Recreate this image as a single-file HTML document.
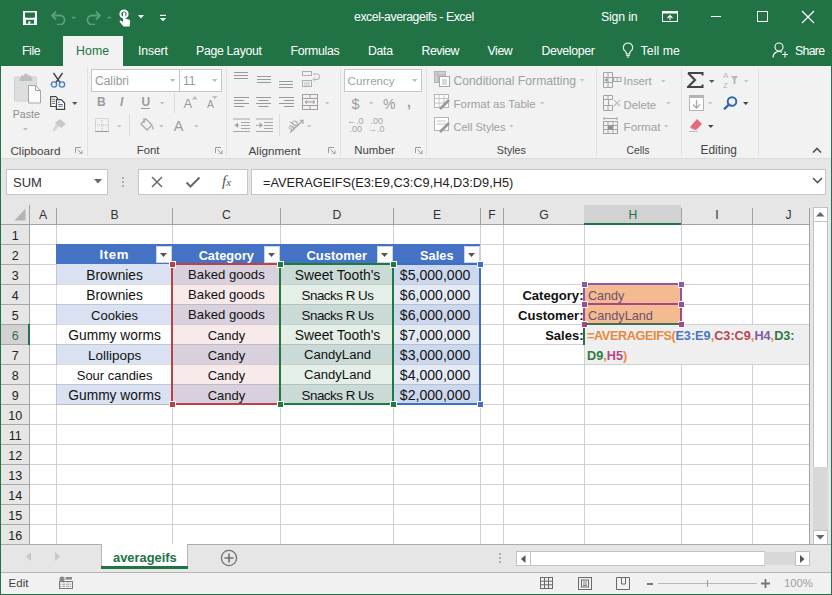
<!DOCTYPE html>
<html><head><meta charset="utf-8"><style>
html,body{margin:0;padding:0;}
body{width:832px;height:595px;position:relative;overflow:hidden;background:#e6e6e6;font-family:"Liberation Sans",sans-serif;}
body>div{position:absolute;box-sizing:content-box;}
.t{white-space:pre;}
</style></head><body>
<div style="left:0px;top:0px;width:832px;height:66px;background:#217346;"></div>
<svg style="position:absolute;left:23px;top:11px;" width="14" height="14" viewBox="0 0 14 14"><rect x="0" y="0" width="14" height="14" fill="#fff"/><path d="M2 1.6h10v3.6a1.5 1.5 0 0 1-1.5 1.5h-7A1.5 1.5 0 0 1 2 5.2z" fill="#217346"/><rect x="3" y="8.8" width="8" height="3.9" fill="#217346"/><rect x="5.3" y="10.4" width="2.1" height="2.3" fill="#fff"/></svg>
<svg style="position:absolute;left:50px;top:9px;" width="28" height="16" viewBox="0 0 28 16"><path d="M6 2.5 2 6.5 6 10.5" fill="none" stroke="#5d9f7b" stroke-width="1.8"/><path d="M2.5 6.5H10a4.6 4.6 0 0 1 0 9.2H7" fill="none" stroke="#5d9f7b" stroke-width="1.8"/><rect x="22" y="7.8" width="3.5" height="1.6" fill="#5d9f7b"/></svg>
<svg style="position:absolute;left:85px;top:9px;" width="28" height="16" viewBox="0 0 28 16"><path d="M11 2.5 15 6.5 11 10.5" fill="none" stroke="#5d9f7b" stroke-width="1.8"/><path d="M14.5 6.5H7a4.6 4.6 0 0 0 0 9.2h3" fill="none" stroke="#5d9f7b" stroke-width="1.8"/><rect x="22.5" y="7.8" width="3.5" height="1.6" fill="#5d9f7b"/></svg>
<svg style="position:absolute;left:118px;top:9px;" width="14" height="18" viewBox="0 0 14 18"><circle cx="6" cy="5" r="3.6" fill="none" stroke="#fff" stroke-width="2"/><path d="M5 4.5a1.2 1.2 0 0 1 2.4 0v5l4 1.3.8 1.2-.6 5.5H5.5L1.5 12.5l.6-1.2 2.9 1.6z" fill="#fff"/></svg>
<svg style="position:absolute;left:138px;top:15px;" width="7" height="4" viewBox="0 0 7 4"><path d="M0 0h6l-3 3.5z" fill="#fff"/></svg>
<svg style="position:absolute;left:159px;top:14px;" width="8" height="8" viewBox="0 0 8 8"><rect x="1" y="0.8" width="6" height="1.2" fill="#fff"/><path d="M0.8 4h6.4L4 7.2z" fill="#fff"/></svg>
<div class="t" style="left:354px;top:10.24px;font-size:12.3px;line-height:15px;color:#fff;font-weight:400;letter-spacing:-0.45px;">excel-averageifs - Excel</div>
<div class="t" style="left:601px;top:10.24px;font-size:12.3px;line-height:15px;color:#fff;font-weight:400;letter-spacing:-0.18px;">Sign in</div>
<svg style="position:absolute;left:662px;top:11px;" width="17" height="12" viewBox="0 0 17 12"><rect x="0.5" y="0.5" width="15" height="10" fill="none" stroke="#fff"/><rect x="0.5" y="0.5" width="15" height="2" fill="#fff"/><path d="M8 9V4.5M5.5 7 8 4.5 10.5 7" fill="none" stroke="#fff" stroke-width="1.1"/></svg>
<div style="left:711px;top:16px;width:10px;height:1px;background:#fff;"></div>
<div style="left:757px;top:11px;width:9px;height:9px;border:1px solid #fff;background:transparent;"></div>
<svg style="position:absolute;left:801px;top:10px;" width="14" height="14" viewBox="0 0 14 14"><path d="M1 1 13 13M13 1 1 13" stroke="#fff" stroke-width="1.3"/></svg>
<div style="left:63px;top:36px;width:60px;height:30px;background:#f2f2f2;"></div>
<div class="t" style="left:22px;top:44.24px;font-size:12.3px;line-height:15px;color:#fff;font-weight:400;letter-spacing:-0.43px;">File</div>
<div class="t" style="left:76px;top:44.24px;font-size:12.3px;line-height:15px;color:#217346;font-weight:400;letter-spacing:0.13px;">Home</div>
<div class="t" style="left:138px;top:44.24px;font-size:12.3px;line-height:15px;color:#fff;font-weight:400;letter-spacing:-0.16px;">Insert</div>
<div class="t" style="left:196px;top:44.24px;font-size:12.3px;line-height:15px;color:#fff;font-weight:400;letter-spacing:-0.31px;">Page Layout</div>
<div class="t" style="left:290.5px;top:44.24px;font-size:12.3px;line-height:15px;color:#fff;font-weight:400;letter-spacing:-0.3px;">Formulas</div>
<div class="t" style="left:368px;top:44.24px;font-size:12.3px;line-height:15px;color:#fff;font-weight:400;letter-spacing:-0.33px;">Data</div>
<div class="t" style="left:421.5px;top:44.24px;font-size:12.3px;line-height:15px;color:#fff;font-weight:400;letter-spacing:-0.48px;">Review</div>
<div class="t" style="left:487.5px;top:44.24px;font-size:12.3px;line-height:15px;color:#fff;font-weight:400;letter-spacing:-0.4px;">View</div>
<div class="t" style="left:541.4px;top:44.24px;font-size:12.3px;line-height:15px;color:#fff;font-weight:400;letter-spacing:-0.33px;">Developer</div>
<div class="t" style="left:640.5px;top:44.24px;font-size:12.3px;line-height:15px;color:#fff;font-weight:400;letter-spacing:0.08px;">Tell me</div>
<div class="t" style="left:795px;top:44.24px;font-size:12.3px;line-height:15px;color:#fff;font-weight:400;letter-spacing:-0.7px;">Share</div>
<svg style="position:absolute;left:622px;top:42px;" width="12" height="16" viewBox="0 0 12 16"><path d="M6 1a4.6 4.6 0 0 0-2.6 8.4c.6.5.9 1.2.9 2V12h3.4v-.6c0-.8.3-1.5.9-2A4.6 4.6 0 0 0 6 1z" fill="none" stroke="#fff" stroke-width="1.1"/><path d="M4.3 13.5h3.4M4.8 15h2.4" stroke="#fff" stroke-width="1"/></svg>
<svg style="position:absolute;left:772px;top:42px;" width="17" height="16" viewBox="0 0 17 16"><circle cx="7" cy="5" r="4" fill="none" stroke="#fff" stroke-width="1.1"/><path d="M1 15.5a6 6 0 0 1 9-5.2" fill="none" stroke="#fff" stroke-width="1.1"/><path d="M13 9.5v6M10 12.5h6" stroke="#fff" stroke-width="1.1"/></svg>
<div style="left:1px;top:66px;width:830px;height:92px;background:#f2f2f2;"></div>
<div style="left:1px;top:158px;width:830px;height:1px;background:#dcdcdc;"></div>
<div style="left:87px;top:68px;width:1px;height:88px;background:#e1e1e1;"></div>
<div style="left:226px;top:68px;width:1px;height:88px;background:#e1e1e1;"></div>
<div style="left:340px;top:68px;width:1px;height:88px;background:#e1e1e1;"></div>
<div style="left:426px;top:68px;width:1px;height:88px;background:#e1e1e1;"></div>
<div style="left:596px;top:68px;width:1px;height:88px;background:#e1e1e1;"></div>
<div style="left:681px;top:68px;width:1px;height:88px;background:#e1e1e1;"></div>
<div style="left:758px;top:68px;width:1px;height:88px;background:#e1e1e1;"></div>
<div class="t" style="left:10.4px;top:142.85px;font-size:11.7px;line-height:15px;color:#444;font-weight:400;">Clipboard</div>
<div class="t" style="left:136.8px;top:143.47px;font-size:11.35px;line-height:14px;color:#444;font-weight:400;">Font</div>
<div class="t" style="left:248.5px;top:142.85px;font-size:11.7px;line-height:15px;color:#444;font-weight:400;">Alignment</div>
<div class="t" style="left:354.3px;top:143.45px;font-size:11.4px;line-height:14px;color:#444;font-weight:400;">Number</div>
<div class="t" style="left:496.8px;top:144.19px;font-size:10.7px;line-height:13px;color:#444;font-weight:400;">Styles</div>
<div class="t" style="left:626.4px;top:144.30px;font-size:10.4px;line-height:13px;color:#444;font-weight:400;">Cells</div>
<div class="t" style="left:700.5px;top:142.78px;font-size:11.9px;line-height:15px;color:#444;font-weight:400;">Editing</div>
<svg style="position:absolute;left:75px;top:147px;" width="8" height="7" viewBox="0 0 8 7"><path d="M0.5 6V0.5H6" fill="none" stroke="#9a9a9a"/><path d="M2.5 2.5 7 7M7 3.5V7H3.5" fill="none" stroke="#9a9a9a"/></svg>
<svg style="position:absolute;left:215px;top:147px;" width="8" height="7" viewBox="0 0 8 7"><path d="M0.5 6V0.5H6" fill="none" stroke="#9a9a9a"/><path d="M2.5 2.5 7 7M7 3.5V7H3.5" fill="none" stroke="#9a9a9a"/></svg>
<svg style="position:absolute;left:328px;top:147px;" width="8" height="7" viewBox="0 0 8 7"><path d="M0.5 6V0.5H6" fill="none" stroke="#9a9a9a"/><path d="M2.5 2.5 7 7M7 3.5V7H3.5" fill="none" stroke="#9a9a9a"/></svg>
<svg style="position:absolute;left:415px;top:147px;" width="8" height="7" viewBox="0 0 8 7"><path d="M0.5 6V0.5H6" fill="none" stroke="#9a9a9a"/><path d="M2.5 2.5 7 7M7 3.5V7H3.5" fill="none" stroke="#9a9a9a"/></svg>
<div style="left:1px;top:159px;width:830px;height:45px;background:#e6e6e6;"></div>
<div style="left:6px;top:169px;width:100px;height:24px;border:1px solid #c6c6c6;background:#fff;"></div>
<div class="t" style="left:13px;top:174.50px;font-size:13px;line-height:16px;color:#333;font-weight:400;">SUM</div>
<svg style="position:absolute;left:94px;top:179px;" width="9" height="5" viewBox="0 0 9 5"><path d="M0 0h8l-4 4.5z" fill="#666"/></svg>
<div style="left:122px;top:177px;width:2px;height:2px;background:#b0b0b0;"></div>
<div style="left:122px;top:181px;width:2px;height:2px;background:#b0b0b0;"></div>
<div style="left:122px;top:185px;width:2px;height:2px;background:#b0b0b0;"></div>
<div style="left:138px;top:169px;width:108px;height:24px;border:1px solid #c6c6c6;background:#fff;"></div>
<svg style="position:absolute;left:150px;top:175px;" width="14" height="14" viewBox="0 0 14 14"><path d="M2 2 12 12M12 2 2 12" stroke="#6a6a6a" stroke-width="1.5"/></svg>
<svg style="position:absolute;left:185px;top:175px;" width="16" height="14" viewBox="0 0 16 14"><path d="M1.5 7.5 5.5 11.5 14.5 2.5" fill="none" stroke="#6a6a6a" stroke-width="2"/></svg>
<div class="t" style="left:222px;top:171px;font-family:'Liberation Serif';font-style:italic;font-size:15px;line-height:20px;color:#555;">f<span style="font-size:11px">x</span></div>
<div style="left:251px;top:169px;width:573px;height:24px;border:1px solid #c6c6c6;background:#fff;"></div>
<div class="t" style="left:263px;top:174.58px;font-size:12.75px;line-height:16px;color:#222;font-weight:400;">=AVERAGEIFS(E3:E9,C3:C9,H4,D3:D9,H5)</div>
<svg style="position:absolute;left:812px;top:177px;" width="11" height="7" viewBox="0 0 11 7"><path d="M1 1 5.5 5.5 10 1" fill="none" stroke="#555" stroke-width="1.6"/></svg>
<div style="left:1px;top:204px;width:808px;height:20px;background:#e6e6e6;"></div>
<div style="left:1px;top:224px;width:28px;height:320px;background:#e6e6e6;"></div>
<div style="left:30px;top:225px;width:779px;height:319px;background:#fff;"></div>
<div style="left:56px;top:224px;width:1px;height:320px;background:#d0d0d0;"></div>
<div style="left:172px;top:224px;width:1px;height:320px;background:#d0d0d0;"></div>
<div style="left:280px;top:224px;width:1px;height:320px;background:#d0d0d0;"></div>
<div style="left:393px;top:224px;width:1px;height:320px;background:#d0d0d0;"></div>
<div style="left:480px;top:224px;width:1px;height:320px;background:#d0d0d0;"></div>
<div style="left:503px;top:224px;width:1px;height:320px;background:#d0d0d0;"></div>
<div style="left:584px;top:224px;width:1px;height:320px;background:#d0d0d0;"></div>
<div style="left:681px;top:224px;width:1px;height:320px;background:#d0d0d0;"></div>
<div style="left:752px;top:224px;width:1px;height:320px;background:#d0d0d0;"></div>
<div style="left:809px;top:224px;width:1px;height:320px;background:#d0d0d0;"></div>
<div style="left:29px;top:244px;width:780px;height:1px;background:#d0d0d0;"></div>
<div style="left:29px;top:264px;width:780px;height:1px;background:#d0d0d0;"></div>
<div style="left:29px;top:284px;width:780px;height:1px;background:#d0d0d0;"></div>
<div style="left:29px;top:304px;width:780px;height:1px;background:#d0d0d0;"></div>
<div style="left:29px;top:324px;width:780px;height:1px;background:#d0d0d0;"></div>
<div style="left:29px;top:344px;width:780px;height:1px;background:#d0d0d0;"></div>
<div style="left:29px;top:364px;width:780px;height:1px;background:#d0d0d0;"></div>
<div style="left:29px;top:384px;width:780px;height:1px;background:#d0d0d0;"></div>
<div style="left:29px;top:404px;width:780px;height:1px;background:#d0d0d0;"></div>
<div style="left:29px;top:424px;width:780px;height:1px;background:#d0d0d0;"></div>
<div style="left:29px;top:444px;width:780px;height:1px;background:#d0d0d0;"></div>
<div style="left:29px;top:464px;width:780px;height:1px;background:#d0d0d0;"></div>
<div style="left:29px;top:484px;width:780px;height:1px;background:#d0d0d0;"></div>
<div style="left:29px;top:504px;width:780px;height:1px;background:#d0d0d0;"></div>
<div style="left:29px;top:524px;width:780px;height:1px;background:#d0d0d0;"></div>
<div style="left:29px;top:544px;width:780px;height:1px;background:#d0d0d0;"></div>
<div style="left:56px;top:208px;width:1px;height:16px;background:#a0a0a0;"></div>
<div style="left:172px;top:208px;width:1px;height:16px;background:#a0a0a0;"></div>
<div style="left:280px;top:208px;width:1px;height:16px;background:#a0a0a0;"></div>
<div style="left:393px;top:208px;width:1px;height:16px;background:#a0a0a0;"></div>
<div style="left:480px;top:208px;width:1px;height:16px;background:#a0a0a0;"></div>
<div style="left:503px;top:208px;width:1px;height:16px;background:#a0a0a0;"></div>
<div style="left:584px;top:208px;width:1px;height:16px;background:#a0a0a0;"></div>
<div style="left:681px;top:208px;width:1px;height:16px;background:#a0a0a0;"></div>
<div style="left:752px;top:208px;width:1px;height:16px;background:#a0a0a0;"></div>
<div style="left:809px;top:208px;width:1px;height:16px;background:#a0a0a0;"></div>
<div style="left:1px;top:224px;width:808px;height:1px;background:#a2a2a2;"></div>
<div style="left:29px;top:205px;width:1px;height:339px;background:#a2a2a2;"></div>
<div style="left:1px;top:244px;width:28px;height:1px;background:#a8a8a8;"></div>
<div style="left:1px;top:264px;width:28px;height:1px;background:#a8a8a8;"></div>
<div style="left:1px;top:284px;width:28px;height:1px;background:#a8a8a8;"></div>
<div style="left:1px;top:304px;width:28px;height:1px;background:#a8a8a8;"></div>
<div style="left:1px;top:324px;width:28px;height:1px;background:#a8a8a8;"></div>
<div style="left:1px;top:344px;width:28px;height:1px;background:#a8a8a8;"></div>
<div style="left:1px;top:364px;width:28px;height:1px;background:#a8a8a8;"></div>
<div style="left:1px;top:384px;width:28px;height:1px;background:#a8a8a8;"></div>
<div style="left:1px;top:404px;width:28px;height:1px;background:#a8a8a8;"></div>
<div style="left:1px;top:424px;width:28px;height:1px;background:#a8a8a8;"></div>
<div style="left:1px;top:444px;width:28px;height:1px;background:#a8a8a8;"></div>
<div style="left:1px;top:464px;width:28px;height:1px;background:#a8a8a8;"></div>
<div style="left:1px;top:484px;width:28px;height:1px;background:#a8a8a8;"></div>
<div style="left:1px;top:504px;width:28px;height:1px;background:#a8a8a8;"></div>
<div style="left:1px;top:524px;width:28px;height:1px;background:#a8a8a8;"></div>
<div style="left:1px;top:544px;width:28px;height:1px;background:#a8a8a8;"></div>
<div style="left:584px;top:205px;width:97px;height:19px;background:#d2d2d2;"></div>
<div style="left:584px;top:223px;width:97px;height:2px;background:#217346;"></div>
<div style="left:1px;top:325px;width:28px;height:19px;background:#d2d2d2;"></div>
<div style="left:28px;top:324px;width:2px;height:21px;background:#217346;"></div>
<svg style="position:absolute;left:14px;top:208px;" width="12" height="13" viewBox="0 0 12 13"><path d="M11.5 0.5V12.5H0.5z" fill="#b4b4b4"/></svg>
<div class="t" style="left:13.00px;width:60px;text-align:center;top:207.87px;font-size:12.2px;line-height:15px;color:#333;font-weight:400;">A</div>
<div class="t" style="left:84.50px;width:60px;text-align:center;top:207.87px;font-size:12.2px;line-height:15px;color:#333;font-weight:400;">B</div>
<div class="t" style="left:196.50px;width:60px;text-align:center;top:207.87px;font-size:12.2px;line-height:15px;color:#333;font-weight:400;">C</div>
<div class="t" style="left:307.00px;width:60px;text-align:center;top:207.87px;font-size:12.2px;line-height:15px;color:#333;font-weight:400;">D</div>
<div class="t" style="left:407.00px;width:60px;text-align:center;top:207.87px;font-size:12.2px;line-height:15px;color:#333;font-weight:400;">E</div>
<div class="t" style="left:462.00px;width:60px;text-align:center;top:207.87px;font-size:12.2px;line-height:15px;color:#333;font-weight:400;">F</div>
<div class="t" style="left:514.00px;width:60px;text-align:center;top:207.87px;font-size:12.2px;line-height:15px;color:#333;font-weight:400;">G</div>
<div class="t" style="left:603.00px;width:60px;text-align:center;top:207.87px;font-size:12.2px;line-height:15px;color:#217346;font-weight:400;">H</div>
<div class="t" style="left:687.00px;width:60px;text-align:center;top:207.87px;font-size:12.2px;line-height:15px;color:#333;font-weight:400;">I</div>
<div class="t" style="left:758.50px;width:60px;text-align:center;top:207.87px;font-size:12.2px;line-height:15px;color:#333;font-weight:400;">J</div>
<div class="t" style="left:1.20px;width:28px;text-align:center;top:228.17px;font-size:12.5px;line-height:16px;color:#222;font-weight:400;">1</div>
<div class="t" style="left:1.20px;width:28px;text-align:center;top:248.17px;font-size:12.5px;line-height:16px;color:#222;font-weight:400;">2</div>
<div class="t" style="left:1.20px;width:28px;text-align:center;top:268.17px;font-size:12.5px;line-height:16px;color:#222;font-weight:400;">3</div>
<div class="t" style="left:1.20px;width:28px;text-align:center;top:288.17px;font-size:12.5px;line-height:16px;color:#222;font-weight:400;">4</div>
<div class="t" style="left:1.20px;width:28px;text-align:center;top:308.17px;font-size:12.5px;line-height:16px;color:#222;font-weight:400;">5</div>
<div class="t" style="left:1.20px;width:28px;text-align:center;top:328.17px;font-size:12.5px;line-height:16px;color:#3d6b52;font-weight:400;">6</div>
<div class="t" style="left:1.20px;width:28px;text-align:center;top:348.17px;font-size:12.5px;line-height:16px;color:#222;font-weight:400;">7</div>
<div class="t" style="left:1.20px;width:28px;text-align:center;top:368.17px;font-size:12.5px;line-height:16px;color:#222;font-weight:400;">8</div>
<div class="t" style="left:1.20px;width:28px;text-align:center;top:388.17px;font-size:12.5px;line-height:16px;color:#222;font-weight:400;">9</div>
<div class="t" style="left:1.20px;width:28px;text-align:center;top:408.17px;font-size:12.5px;line-height:16px;color:#222;font-weight:400;">10</div>
<div class="t" style="left:1.20px;width:28px;text-align:center;top:428.17px;font-size:12.5px;line-height:16px;color:#222;font-weight:400;">11</div>
<div class="t" style="left:1.20px;width:28px;text-align:center;top:448.17px;font-size:12.5px;line-height:16px;color:#222;font-weight:400;">12</div>
<div class="t" style="left:1.20px;width:28px;text-align:center;top:468.17px;font-size:12.5px;line-height:16px;color:#222;font-weight:400;">13</div>
<div class="t" style="left:1.20px;width:28px;text-align:center;top:488.17px;font-size:12.5px;line-height:16px;color:#222;font-weight:400;">14</div>
<div class="t" style="left:1.20px;width:28px;text-align:center;top:508.17px;font-size:12.5px;line-height:16px;color:#222;font-weight:400;">15</div>
<div class="t" style="left:1.20px;width:28px;text-align:center;top:528.17px;font-size:12.5px;line-height:16px;color:#222;font-weight:400;">16</div>
<div style="left:56px;top:244px;width:424px;height:20px;background:#4472c4;"></div>
<div style="left:56px;top:264px;width:116px;height:20px;background:#d9e1f2;"></div>
<div style="left:172px;top:264px;width:108px;height:20px;background:#d8d0dc;"></div>
<div style="left:280px;top:264px;width:113px;height:20px;background:#cadbd7;"></div>
<div style="left:393px;top:264px;width:87px;height:20px;background:#cbd8ee;"></div>
<div style="left:56px;top:284px;width:116px;height:20px;background:#ffffff;"></div>
<div style="left:172px;top:284px;width:108px;height:20px;background:#f8e9ea;"></div>
<div style="left:280px;top:284px;width:113px;height:20px;background:#e4efe8;"></div>
<div style="left:393px;top:284px;width:87px;height:20px;background:#e4ebf7;"></div>
<div style="left:56px;top:304px;width:116px;height:20px;background:#d9e1f2;"></div>
<div style="left:172px;top:304px;width:108px;height:20px;background:#d8d0dc;"></div>
<div style="left:280px;top:304px;width:113px;height:20px;background:#cadbd7;"></div>
<div style="left:393px;top:304px;width:87px;height:20px;background:#cbd8ee;"></div>
<div style="left:56px;top:324px;width:116px;height:20px;background:#ffffff;"></div>
<div style="left:172px;top:324px;width:108px;height:20px;background:#f8e9ea;"></div>
<div style="left:280px;top:324px;width:113px;height:20px;background:#e4efe8;"></div>
<div style="left:393px;top:324px;width:87px;height:20px;background:#e4ebf7;"></div>
<div style="left:56px;top:344px;width:116px;height:20px;background:#d9e1f2;"></div>
<div style="left:172px;top:344px;width:108px;height:20px;background:#d8d0dc;"></div>
<div style="left:280px;top:344px;width:113px;height:20px;background:#cadbd7;"></div>
<div style="left:393px;top:344px;width:87px;height:20px;background:#cbd8ee;"></div>
<div style="left:56px;top:364px;width:116px;height:20px;background:#ffffff;"></div>
<div style="left:172px;top:364px;width:108px;height:20px;background:#f8e9ea;"></div>
<div style="left:280px;top:364px;width:113px;height:20px;background:#e4efe8;"></div>
<div style="left:393px;top:364px;width:87px;height:20px;background:#e4ebf7;"></div>
<div style="left:56px;top:384px;width:116px;height:20px;background:#d9e1f2;"></div>
<div style="left:172px;top:384px;width:108px;height:20px;background:#d8d0dc;"></div>
<div style="left:280px;top:384px;width:113px;height:20px;background:#cadbd7;"></div>
<div style="left:393px;top:384px;width:87px;height:20px;background:#cbd8ee;"></div>
<div style="left:56px;top:284px;width:424px;height:1px;background:rgba(150,150,150,0.35);"></div>
<div style="left:56px;top:304px;width:424px;height:1px;background:rgba(150,150,150,0.35);"></div>
<div style="left:56px;top:324px;width:424px;height:1px;background:rgba(150,150,150,0.35);"></div>
<div style="left:56px;top:344px;width:424px;height:1px;background:rgba(150,150,150,0.35);"></div>
<div style="left:56px;top:364px;width:424px;height:1px;background:rgba(150,150,150,0.35);"></div>
<div style="left:56px;top:384px;width:424px;height:1px;background:rgba(150,150,150,0.35);"></div>
<div style="left:56px;top:404px;width:424px;height:1px;background:rgba(150,150,150,0.35);"></div>
<div style="left:56px;top:264px;width:1px;height:140px;background:rgba(150,150,150,0.35);"></div>
<div style="left:172px;top:264px;width:1px;height:140px;background:rgba(150,150,150,0.35);"></div>
<div style="left:280px;top:264px;width:1px;height:140px;background:rgba(150,150,150,0.35);"></div>
<div style="left:393px;top:264px;width:1px;height:140px;background:rgba(150,150,150,0.35);"></div>
<div class="t" style="left:54.30px;width:120px;text-align:center;top:247.43px;font-size:13.2px;line-height:16px;color:#fff;font-weight:700;letter-spacing:0.6px;">Item</div>
<div style="left:156px;top:246px;width:14px;height:15px;border:1px solid #c9d3e6;background:#fff;"></div>
<svg style="position:absolute;left:160px;top:253px;" width="8" height="5" viewBox="0 0 8 5"><path d="M0 0h7l-3.5 4z" fill="#555"/></svg>
<div class="t" style="left:166.30px;width:120px;text-align:center;top:247.57px;font-size:12.78px;line-height:16px;color:#fff;font-weight:700;">Category</div>
<div style="left:264px;top:246px;width:14px;height:15px;border:1px solid #c9d3e6;background:#fff;"></div>
<svg style="position:absolute;left:268px;top:253px;" width="8" height="5" viewBox="0 0 8 5"><path d="M0 0h7l-3.5 4z" fill="#555"/></svg>
<div class="t" style="left:276.80px;width:120px;text-align:center;top:247.50px;font-size:13.0px;line-height:16px;color:#fff;font-weight:700;">Customer</div>
<div style="left:377px;top:246px;width:14px;height:15px;border:1px solid #c9d3e6;background:#fff;"></div>
<svg style="position:absolute;left:381px;top:253px;" width="8" height="5" viewBox="0 0 8 5"><path d="M0 0h7l-3.5 4z" fill="#555"/></svg>
<div class="t" style="left:376.80px;width:120px;text-align:center;top:247.56px;font-size:12.8px;line-height:16px;color:#fff;font-weight:700;">Sales</div>
<div style="left:464px;top:246px;width:14px;height:15px;border:1px solid #c9d3e6;background:#fff;"></div>
<svg style="position:absolute;left:468px;top:253px;" width="8" height="5" viewBox="0 0 8 5"><path d="M0 0h7l-3.5 4z" fill="#555"/></svg>
<div class="t" style="left:57.60px;width:114px;text-align:center;top:266.74px;font-size:13.75px;line-height:17px;color:#111;font-weight:400;">Brownies</div>
<div class="t" style="left:173.40px;width:106px;text-align:center;top:267.45px;font-size:13.14px;line-height:16px;color:#111;font-weight:400;">Baked goods</div>
<div class="t" style="left:281.50px;width:112px;text-align:center;top:266.70px;font-size:13.86px;line-height:17px;color:#111;font-weight:400;">Sweet Tooth's</div>
<div class="t" style="left:390.10px;width:90px;text-align:center;top:266.11px;font-size:14.1px;line-height:18px;color:#111;font-weight:400;">$5,000,000</div>
<div class="t" style="left:57.60px;width:114px;text-align:center;top:286.74px;font-size:13.75px;line-height:17px;color:#111;font-weight:400;">Brownies</div>
<div class="t" style="left:173.40px;width:106px;text-align:center;top:287.45px;font-size:13.14px;line-height:16px;color:#111;font-weight:400;">Baked goods</div>
<div class="t" style="left:281.50px;width:112px;text-align:center;top:286.86px;font-size:13.4px;line-height:17px;color:#111;font-weight:400;letter-spacing:-0.5px;">Snacks R Us</div>
<div class="t" style="left:390.10px;width:90px;text-align:center;top:286.11px;font-size:14.1px;line-height:18px;color:#111;font-weight:400;">$6,000,000</div>
<div class="t" style="left:57.60px;width:114px;text-align:center;top:307.50px;font-size:13.0px;line-height:16px;color:#111;font-weight:400;">Cookies</div>
<div class="t" style="left:173.40px;width:106px;text-align:center;top:307.45px;font-size:13.14px;line-height:16px;color:#111;font-weight:400;">Baked goods</div>
<div class="t" style="left:281.50px;width:112px;text-align:center;top:306.86px;font-size:13.4px;line-height:17px;color:#111;font-weight:400;letter-spacing:-0.5px;">Snacks R Us</div>
<div class="t" style="left:390.10px;width:90px;text-align:center;top:306.11px;font-size:14.1px;line-height:18px;color:#111;font-weight:400;">$6,000,000</div>
<div class="t" style="left:57.60px;width:114px;text-align:center;top:326.73px;font-size:13.78px;line-height:17px;color:#111;font-weight:400;">Gummy worms</div>
<div class="t" style="left:173.40px;width:106px;text-align:center;top:327.51px;font-size:12.97px;line-height:16px;color:#111;font-weight:400;">Candy</div>
<div class="t" style="left:281.50px;width:112px;text-align:center;top:326.70px;font-size:13.86px;line-height:17px;color:#111;font-weight:400;">Sweet Tooth's</div>
<div class="t" style="left:390.10px;width:90px;text-align:center;top:326.11px;font-size:14.1px;line-height:18px;color:#111;font-weight:400;">$7,000,000</div>
<div class="t" style="left:57.60px;width:114px;text-align:center;top:346.83px;font-size:13.47px;line-height:17px;color:#111;font-weight:400;">Lollipops</div>
<div class="t" style="left:173.40px;width:106px;text-align:center;top:347.51px;font-size:12.97px;line-height:16px;color:#111;font-weight:400;">Candy</div>
<div class="t" style="left:281.50px;width:112px;text-align:center;top:347.45px;font-size:13.12px;line-height:16px;color:#111;font-weight:400;">CandyLand</div>
<div class="t" style="left:390.10px;width:90px;text-align:center;top:346.11px;font-size:14.1px;line-height:18px;color:#111;font-weight:400;">$3,000,000</div>
<div class="t" style="left:57.60px;width:114px;text-align:center;top:367.50px;font-size:12.98px;line-height:16px;color:#111;font-weight:400;">Sour candies</div>
<div class="t" style="left:173.40px;width:106px;text-align:center;top:367.51px;font-size:12.97px;line-height:16px;color:#111;font-weight:400;">Candy</div>
<div class="t" style="left:281.50px;width:112px;text-align:center;top:367.45px;font-size:13.12px;line-height:16px;color:#111;font-weight:400;">CandyLand</div>
<div class="t" style="left:390.10px;width:90px;text-align:center;top:366.11px;font-size:14.1px;line-height:18px;color:#111;font-weight:400;">$4,000,000</div>
<div class="t" style="left:57.60px;width:114px;text-align:center;top:386.73px;font-size:13.78px;line-height:17px;color:#111;font-weight:400;">Gummy worms</div>
<div class="t" style="left:173.40px;width:106px;text-align:center;top:387.51px;font-size:12.97px;line-height:16px;color:#111;font-weight:400;">Candy</div>
<div class="t" style="left:281.50px;width:112px;text-align:center;top:386.86px;font-size:13.4px;line-height:17px;color:#111;font-weight:400;letter-spacing:-0.5px;">Snacks R Us</div>
<div class="t" style="left:390.10px;width:90px;text-align:center;top:386.11px;font-size:14.1px;line-height:18px;color:#111;font-weight:400;">$2,000,000</div>
<div style="left:171px;top:263px;width:110px;height:2px;background:#b8424a;"></div>
<div style="left:171px;top:403px;width:110px;height:2px;background:#b8424a;"></div>
<div style="left:171px;top:263px;width:2px;height:142px;background:#b8424a;"></div>
<div style="left:279px;top:263px;width:2px;height:142px;background:#b8424a;"></div>
<div style="left:168.5px;top:260.5px;width:5px;height:5px;background:#b8424a;border:1px solid #fff;"></div>
<div style="left:276.5px;top:260.5px;width:5px;height:5px;background:#b8424a;border:1px solid #fff;"></div>
<div style="left:168.5px;top:400.5px;width:5px;height:5px;background:#b8424a;border:1px solid #fff;"></div>
<div style="left:276.5px;top:400.5px;width:5px;height:5px;background:#b8424a;border:1px solid #fff;"></div>
<div style="left:392px;top:263px;width:89px;height:2px;background:#3f6fc0;"></div>
<div style="left:392px;top:403px;width:89px;height:2px;background:#3f6fc0;"></div>
<div style="left:392px;top:263px;width:2px;height:142px;background:#3f6fc0;"></div>
<div style="left:479px;top:263px;width:2px;height:142px;background:#3f6fc0;"></div>
<div style="left:389.5px;top:260.5px;width:5px;height:5px;background:#3f6fc0;border:1px solid #fff;"></div>
<div style="left:476.5px;top:260.5px;width:5px;height:5px;background:#3f6fc0;border:1px solid #fff;"></div>
<div style="left:389.5px;top:400.5px;width:5px;height:5px;background:#3f6fc0;border:1px solid #fff;"></div>
<div style="left:476.5px;top:400.5px;width:5px;height:5px;background:#3f6fc0;border:1px solid #fff;"></div>
<div style="left:279px;top:263px;width:115px;height:2px;background:#1f7a3c;"></div>
<div style="left:279px;top:403px;width:115px;height:2px;background:#1f7a3c;"></div>
<div style="left:279px;top:263px;width:2px;height:142px;background:#1f7a3c;"></div>
<div style="left:392px;top:263px;width:2px;height:142px;background:#1f7a3c;"></div>
<div style="left:276.5px;top:260.5px;width:5px;height:5px;background:#1f7a3c;border:1px solid #fff;"></div>
<div style="left:389.5px;top:260.5px;width:5px;height:5px;background:#1f7a3c;border:1px solid #fff;"></div>
<div style="left:276.5px;top:400.5px;width:5px;height:5px;background:#1f7a3c;border:1px solid #fff;"></div>
<div style="left:389.5px;top:400.5px;width:5px;height:5px;background:#1f7a3c;border:1px solid #fff;"></div>
<div class="t" style="left:483.50px;width:100px;text-align:right;top:288.46px;font-size:13.1px;line-height:16px;color:#111;font-weight:700;">Category:</div>
<div class="t" style="left:483.50px;width:100px;text-align:right;top:308.46px;font-size:13.1px;line-height:16px;color:#111;font-weight:700;">Customer:</div>
<div class="t" style="left:483.50px;width:100px;text-align:right;top:327.50px;font-size:13.0px;line-height:16px;color:#111;font-weight:700;">Sales:</div>
<div style="left:585px;top:325px;width:224px;height:39px;background:#efefef;"></div>
<div style="left:585px;top:285px;width:96px;height:39px;background:#f4bb92;"></div>
<div style="left:584px;top:304px;width:97px;height:1px;background:#c98f95;"></div>
<div class="t" style="left:588px;top:287.63px;font-size:12.6px;line-height:16px;color:#6f4f6f;font-weight:400;">Candy</div>
<div class="t" style="left:588px;top:307.60px;font-size:12.7px;line-height:16px;color:#6f4f6f;font-weight:400;">CandyLand</div>
<div style="left:583px;top:283px;width:99px;height:2px;background:#8a5aa6;"></div>
<div style="left:583px;top:303px;width:99px;height:2px;background:#8a5aa6;"></div>
<div style="left:583px;top:283px;width:2px;height:22px;background:#8a5aa6;"></div>
<div style="left:680px;top:283px;width:2px;height:22px;background:#8a5aa6;"></div>
<div style="left:580.5px;top:280.5px;width:5px;height:5px;background:#8a5aa6;border:1px solid #fff;"></div>
<div style="left:677.5px;top:280.5px;width:5px;height:5px;background:#8a5aa6;border:1px solid #fff;"></div>
<div style="left:580.5px;top:300.5px;width:5px;height:5px;background:#8a5aa6;border:1px solid #fff;"></div>
<div style="left:677.5px;top:300.5px;width:5px;height:5px;background:#8a5aa6;border:1px solid #fff;"></div>
<div style="left:583px;top:303px;width:99px;height:2px;background:#a8468a;"></div>
<div style="left:583px;top:323px;width:99px;height:2px;background:#a8468a;"></div>
<div style="left:583px;top:303px;width:2px;height:22px;background:#a8468a;"></div>
<div style="left:680px;top:303px;width:2px;height:22px;background:#a8468a;"></div>
<div style="left:580.5px;top:300.5px;width:5px;height:5px;background:#a8468a;border:1px solid #fff;"></div>
<div style="left:677.5px;top:300.5px;width:5px;height:5px;background:#a8468a;border:1px solid #fff;"></div>
<div style="left:580.5px;top:320.5px;width:5px;height:5px;background:#a8468a;border:1px solid #fff;"></div>
<div style="left:677.5px;top:320.5px;width:5px;height:5px;background:#a8468a;border:1px solid #fff;"></div>
<div style="left:586px;top:323px;width:93px;height:2px;background:#3f7350;"></div>
<div style="left:583px;top:328px;width:2px;height:17px;background:#2a6b47;"></div>
<div class="t" style="left:587px;top:327.60px;font-size:12.7px;line-height:16px;color:#000;font-weight:700;"><span style="color:#e8893e;letter-spacing:-0.4px">=AVERAGEIFS(</span><span style="color:#4a76c2;letter-spacing:0px">E3:E9</span><span style="color:#e8893e;letter-spacing:0px">,</span><span style="color:#b9474f;letter-spacing:0px">C3:C9</span><span style="color:#e8893e;letter-spacing:0px">,</span><span style="color:#7a5fa8;letter-spacing:0px">H4</span><span style="color:#e8893e;letter-spacing:0px">,</span><span style="color:#2b7a48;letter-spacing:0px">D3:</span></div>
<div class="t" style="left:587px;top:347.60px;font-size:12.7px;line-height:16px;color:#000;font-weight:700;"><span style="color:#2b7a48;letter-spacing:0px">D9</span><span style="color:#e8893e;letter-spacing:0px">,</span><span style="color:#b2497f;letter-spacing:0px">H5</span><span style="color:#e8893e;letter-spacing:0px">)</span></div>
<div style="left:809px;top:224px;width:1px;height:321px;background:#a2a2a2;"></div>
<div style="left:810px;top:204px;width:21px;height:341px;background:#e6e6e6;"></div>
<div style="left:813px;top:207px;width:13px;height:13px;border:1px solid #c2c2c2;background:#fff;"></div>
<svg style="position:absolute;left:816px;top:212px;" width="9" height="5" viewBox="0 0 9 5"><path d="M0 4.5h8.5L4.25 0z" fill="#666"/></svg>
<div style="left:813px;top:221px;width:13px;height:245px;border:1px solid #c2c2c2;background:#fff;"></div>
<div style="left:813px;top:467px;width:15px;height:64px;background:#d8d8d8;"></div>
<div style="left:813px;top:530px;width:13px;height:13px;border:1px solid #c2c2c2;background:#fff;"></div>
<svg style="position:absolute;left:816px;top:535px;" width="9" height="5" viewBox="0 0 9 5"><path d="M0 0h8.5L4.25 4.5z" fill="#666"/></svg>
<div style="left:1px;top:544px;width:830px;height:28px;background:#e6e6e6;"></div>
<div style="left:1px;top:544px;width:830px;height:1px;background:#ababab;"></div>
<div style="left:1px;top:572px;width:830px;height:1px;background:#b4b4b4;"></div>
<svg style="position:absolute;left:26px;top:552px;" width="6" height="10" viewBox="0 0 6 10"><path d="M5 0v9L0 4.5z" fill="#c8c8c8"/></svg>
<svg style="position:absolute;left:55px;top:552px;" width="6" height="10" viewBox="0 0 6 10"><path d="M0 0v9l5-4.5z" fill="#c8c8c8"/></svg>
<div style="left:101px;top:544px;width:87px;height:25px;background:#fff;border-left:1px solid #b6b6b6;border-right:1px solid #b6b6b6;box-sizing:border-box;"></div>
<div style="left:101px;top:566px;width:87px;height:3px;background:#217346;"></div>
<div class="t" style="left:113px;top:549.53px;font-size:12.9px;line-height:16px;color:#217346;font-weight:700;">averageifs</div>
<svg style="position:absolute;left:220px;top:549px;" width="18" height="18" viewBox="0 0 18 18"><circle cx="9" cy="9" r="7.6" fill="none" stroke="#707070" stroke-width="1.3"/><path d="M9 4.5v9M4.5 9h9" stroke="#707070" stroke-width="1.6"/></svg>
<div style="left:499px;top:553px;width:2px;height:2px;background:#b0b0b0;"></div>
<div style="left:499px;top:557px;width:2px;height:2px;background:#b0b0b0;"></div>
<div style="left:499px;top:561px;width:2px;height:2px;background:#b0b0b0;"></div>
<div style="left:516px;top:551px;width:13px;height:13px;border:1px solid #c2c2c2;background:#fff;"></div>
<svg style="position:absolute;left:521px;top:555px;" width="5" height="8" viewBox="0 0 5 8"><path d="M4.5 0v8L0 4z" fill="#555"/></svg>
<div style="left:530px;top:551px;width:233px;height:13px;border:1px solid #c2c2c2;background:#fff;"></div>
<div style="left:764px;top:552px;width:31px;height:13px;background:#d8d8d8;"></div>
<div style="left:795px;top:551px;width:13px;height:13px;border:1px solid #c2c2c2;background:#fff;"></div>
<svg style="position:absolute;left:800px;top:555px;" width="5" height="8" viewBox="0 0 5 8"><path d="M0 0v8l4.5-4z" fill="#555"/></svg>
<div style="left:1px;top:573px;width:830px;height:21px;background:#f1f1f1;"></div>
<div class="t" style="left:8.6px;top:576.02px;font-size:11.5px;line-height:14px;color:#444;font-weight:400;">Edit</div>
<svg style="position:absolute;left:59px;top:576px;" width="14" height="13" viewBox="0 0 14 13"><circle cx="3" cy="3" r="2.6" fill="#8a8a8a"/><rect x="6.5" y="1" width="6.5" height="2.6" fill="#8a8a8a"/><rect x="0.5" y="5.5" width="13" height="7" fill="none" stroke="#7a7a7a"/><path d="M1 8.2h12M1 10.4h12M4.8 6v6M9 6v6" stroke="#9a9a9a" stroke-width=".9" stroke-dasharray="1.2 .8"/></svg>
<svg style="position:absolute;left:540px;top:577px;" width="14" height="12" viewBox="0 0 14 12"><rect x="0.5" y="0.5" width="12" height="11" fill="none" stroke="#6a6a6a"/><path d="M0 4.2h13M0 7.8h13M4.5 0v12M8.5 0v12" stroke="#6a6a6a"/></svg>
<svg style="position:absolute;left:578px;top:577px;" width="15" height="13" viewBox="0 0 15 13"><rect x="0.5" y="0.5" width="13" height="12" fill="none" stroke="#6a6a6a"/><rect x="3.5" y="3" width="7" height="7" fill="none" stroke="#6a6a6a"/><path d="M5 5h4M5 7h4M5 8.5h4" stroke="#6a6a6a" stroke-width=".8"/></svg>
<svg style="position:absolute;left:616px;top:577px;" width="15" height="13" viewBox="0 0 15 13"><path d="M0.5 0.5h13v12h-13z" fill="none" stroke="#6a6a6a"/><path d="M5.5 0v7h4V0" fill="none" stroke="#6a6a6a"/></svg>
<div style="left:647px;top:583px;width:6px;height:2px;background:#777;"></div>
<div style="left:658px;top:583px;width:99px;height:1px;background:#b8b8b8;"></div>
<div style="left:707px;top:580px;width:1px;height:7px;background:#9a9a9a;"></div>
<svg style="position:absolute;left:761px;top:579px;" width="9" height="9" viewBox="0 0 9 9"><path d="M4.5 0v9M0 4.5h9" stroke="#777" stroke-width="1.8"/></svg>
<div class="t" style="left:784px;top:576.08px;font-size:11.3px;line-height:14px;color:#a0a0a0;font-weight:400;">100%</div>
<div style="left:0px;top:65px;width:1px;height:530px;background:#217346;"></div>
<div style="left:831px;top:65px;width:1px;height:530px;background:#217346;"></div>
<div style="left:0px;top:594px;width:832px;height:1px;background:#217346;"></div>
<svg style="position:absolute;left:13px;top:73px;" width="30" height="32" viewBox="0 0 30 32"><rect x="1.5" y="4" width="22" height="24" rx="1" fill="#dedede" stroke="#cfcfcf"/><path d="M8 4.5V2.5h3a2 2 0 0 1 4 0h3v2l1.5 1.5v2h-13v-2z" fill="#bdbdbd"/><path d="M15.5 12.5h7l5 5v12.5h-12z" fill="#fbfbfb" stroke="#a6a6a6"/><path d="M22.5 12.5v5h5" fill="none" stroke="#a6a6a6"/></svg>
<div class="t" style="left:12.8px;top:108.33px;font-size:10.6px;line-height:13px;color:#8e8e8e;font-weight:400;">Paste</div>
<svg style="position:absolute;left:23px;top:128px;" width="6" height="3" viewBox="0 0 6 3"><path d="M0 0h5l-2.5 2.5z" fill="#bdbdbd"/></svg>
<svg style="position:absolute;left:50px;top:72px;" width="16" height="16" viewBox="0 0 16 16"><path d="M3.5 1 10 10.5M12.5 1 6 10.5" stroke="#444" stroke-width="1.4"/><circle cx="4" cy="12.5" r="2.6" fill="none" stroke="#4a7fc1" stroke-width="1.4"/><circle cx="12" cy="12.5" r="2.6" fill="none" stroke="#4a7fc1" stroke-width="1.4"/></svg>
<svg style="position:absolute;left:50px;top:96px;" width="16" height="14" viewBox="0 0 16 14"><path d="M0.7 0.7H5.8L7.6 2.5V10.5H0.7Z" fill="#fff" stroke="#444" stroke-width="1.2"/><path d="M6.4 3.6H11.2L14.6 7V13.4H6.4Z" fill="#fff" stroke="#444" stroke-width="1.2"/><path d="M2.2 3.3h2.7M2.2 5.4h2.7M2.2 7.5h2.7" stroke="#555" stroke-width=".9"/><path d="M8.2 6.2h1.6M8.2 8.5h4.6M8.2 10.3h4.6" stroke="#3d5e9e" stroke-width=".9"/></svg>
<svg style="position:absolute;left:72px;top:102px;" width="6" height="4" viewBox="0 0 6 4"><path d="M0 0h5.5l-2.75 3z" fill="#555"/></svg>
<svg style="position:absolute;left:51px;top:118px;" width="16" height="14" viewBox="0 0 16 14"><path d="M9 1 15 6 10 10 4 5z" fill="#c8c8c8"/><path d="M5 6 1.5 12.5l2 1L8 8z" fill="#d6d6d6"/></svg>
<div style="left:91px;top:69px;width:87px;height:21px;border:1px solid #c6c6c6;background:#fff;"></div>
<div style="left:179px;top:69px;width:41px;height:21px;border:1px solid #c6c6c6;background:#fff;"></div>
<div class="t" style="left:95px;top:73.84px;font-size:12px;line-height:15px;color:#9a9a9a;font-weight:400;">Calibri</div>
<div class="t" style="left:183px;top:73.84px;font-size:12px;line-height:15px;color:#9a9a9a;font-weight:400;">11</div>
<svg style="position:absolute;left:170px;top:79px;" width="6" height="4" viewBox="0 0 6 4"><path d="M0 0h5.5l-2.75 3z" fill="#bbb"/></svg>
<svg style="position:absolute;left:212px;top:79px;" width="6" height="4" viewBox="0 0 6 4"><path d="M0 0h5.5l-2.75 3z" fill="#bbb"/></svg>
<div class="t" style="left:97px;top:95.34px;font-size:12px;line-height:15px;color:#9c9c9c;font-weight:700;">B</div>
<div class="t" style="left:120px;top:95.34px;font-size:12px;line-height:15px;color:#9c9c9c;font-weight:700;font-style:italic;">I</div>
<div class="t" style="left:141.5px;top:95.34px;font-size:12px;line-height:15px;color:#9c9c9c;font-weight:700;">U</div>
<div style="left:141px;top:108px;width:9px;height:1px;background:#9c9c9c;"></div>
<svg style="position:absolute;left:160px;top:102px;" width="5" height="3" viewBox="0 0 5 3"><path d="M0 0h4.5L2.25 2.5z" fill="#bbb"/></svg>
<div style="left:174px;top:93px;width:1px;height:20px;background:#dcdcdc;"></div>
<div class="t" style="left:183.5px;top:96.00px;font-size:13px;line-height:16px;color:#9c9c9c;font-weight:400;">A</div>
<svg style="position:absolute;left:192px;top:96px;" width="6" height="4" viewBox="0 0 6 4"><path d="M0 3.5h5.5L2.75 0z" fill="#bbb"/></svg>
<div class="t" style="left:207px;top:98.36px;font-size:10.5px;line-height:13px;color:#9c9c9c;font-weight:400;">A</div>
<svg style="position:absolute;left:212px;top:96px;" width="6" height="4" viewBox="0 0 6 4"><path d="M0 0h5.5L2.75 3z" fill="#bbb"/></svg>
<svg style="position:absolute;left:95px;top:118px;" width="14" height="14" viewBox="0 0 14 14"><path d="M.5 .5h13v13h-13zM7 0v14M0 7h14" fill="none" stroke="#bdbdbd" stroke-dasharray="1 1"/><path d="M0 13.5h14" stroke="#9a9a9a"/></svg>
<svg style="position:absolute;left:117px;top:125px;" width="5" height="3" viewBox="0 0 5 3"><path d="M0 0h4.5L2.25 2.5z" fill="#c4c4c4"/></svg>
<div style="left:129px;top:114px;width:1px;height:22px;background:#dcdcdc;"></div>
<svg style="position:absolute;left:138px;top:117px;" width="17" height="16" viewBox="0 0 17 16"><path d="M3 7 8 2l6 6-5 5z" fill="none" stroke="#aaa" stroke-width="1.3"/><path d="M6 1v5" stroke="#aaa" stroke-width="1.3"/><path d="M14 9c1 1.5 1.5 2.5.5 3.3" fill="none" stroke="#aaa" stroke-width="1.2"/></svg>
<svg style="position:absolute;left:159px;top:125px;" width="5" height="3" viewBox="0 0 5 3"><path d="M0 0h4.5L2.25 2.5z" fill="#c4c4c4"/></svg>
<div class="t" style="left:173.8px;top:116.68px;font-size:14.5px;line-height:18px;color:#9c9c9c;font-weight:400;">A</div>
<svg style="position:absolute;left:194px;top:125px;" width="5" height="3" viewBox="0 0 5 3"><path d="M0 0h4.5L2.25 2.5z" fill="#c4c4c4"/></svg>
<svg style="position:absolute;left:234px;top:72px;" width="17" height="11" viewBox="0 0 17 11"><rect x="0" y="0" width="14" height="1" fill="#999"/><rect x="0" y="3" width="14" height="1" fill="#999"/><rect x="0" y="6" width="14" height="1" fill="#999"/></svg>
<svg style="position:absolute;left:257px;top:76px;" width="17" height="11" viewBox="0 0 17 11"><rect x="0" y="0" width="14" height="1" fill="#999"/><rect x="0" y="3" width="14" height="1" fill="#999"/><rect x="0" y="6" width="14" height="1" fill="#999"/></svg>
<svg style="position:absolute;left:279px;top:81px;" width="17" height="11" viewBox="0 0 17 11"><rect x="0" y="0" width="14" height="1" fill="#999"/><rect x="0" y="3" width="14" height="1" fill="#999"/><rect x="0" y="6" width="14" height="1" fill="#999"/></svg>
<svg style="position:absolute;left:302px;top:71px;" width="19" height="17" viewBox="0 0 19 17"><rect x=".5" y=".5" width="9" height="4" fill="none" stroke="#b0b0b0"/><rect x=".5" y="9.5" width="9" height="6" fill="none" stroke="#b0b0b0"/><path d="M2 12h6M2 14h6" stroke="#b0b0b0" stroke-width=".8"/><path d="M11 3h4a2.5 2.5 0 0 1 0 5.5h-3" fill="none" stroke="#b0b0b0"/><path d="M13 6.5l-2 2 2 2" fill="none" stroke="#b0b0b0"/></svg>
<svg style="position:absolute;left:234px;top:97px;" width="17" height="14" viewBox="0 0 17 14"><rect x="0" y="0" width="15" height="1" fill="#999"/><rect x="0" y="3" width="10" height="1" fill="#999"/><rect x="0" y="6" width="15" height="1" fill="#999"/><rect x="0" y="9" width="10" height="1" fill="#999"/></svg>
<svg style="position:absolute;left:256px;top:97px;" width="17" height="14" viewBox="0 0 17 14"><rect x="0" y="0" width="15" height="1" fill="#999"/><rect x="2.5" y="3" width="10" height="1" fill="#999"/><rect x="0" y="6" width="15" height="1" fill="#999"/><rect x="2.5" y="9" width="10" height="1" fill="#999"/></svg>
<svg style="position:absolute;left:279px;top:97px;" width="17" height="14" viewBox="0 0 17 14"><rect x="0" y="0" width="15" height="1" fill="#999"/><rect x="5" y="3" width="10" height="1" fill="#999"/><rect x="0" y="6" width="15" height="1" fill="#999"/><rect x="5" y="9" width="10" height="1" fill="#999"/></svg>
<svg style="position:absolute;left:302px;top:94px;" width="17" height="17" viewBox="0 0 17 17"><rect x=".5" y=".5" width="15" height="15" fill="none" stroke="#a89c9c"/><path d="M0 4.5h16M0 11.5h16M8 0v4.5M8 11.5v4.5" stroke="#a89c9c"/><path d="M3.5 8h9M5 6.3 3.2 8 5 9.7M11 6.3 12.8 8 11 9.7" fill="none" stroke="#a08e8e"/></svg>
<svg style="position:absolute;left:325px;top:102px;" width="5" height="3" viewBox="0 0 5 3"><path d="M0 0h4.5L2.25 2.5z" fill="#c4c4c4"/></svg>
<svg style="position:absolute;left:233px;top:118px;" width="18" height="14" viewBox="0 0 18 14"><path d="M0 1h17M8 4.5h9M8 7.5h9M8 10.5h9M0 13.5h17" stroke="#a6a6a6" stroke-width="1.1"/><path d="M5 4.5 1.5 7.3 5 10z" fill="#a6a6a6"/><path d="M2 7.3h4" stroke="#a6a6a6"/></svg>
<svg style="position:absolute;left:256px;top:118px;" width="18" height="14" viewBox="0 0 18 14"><path d="M0 1h17M8 4.5h9M8 7.5h9M8 10.5h9M0 13.5h17" stroke="#a6a6a6" stroke-width="1.1"/><path d="M3.5 4.5 7 7.3 3.5 10z" fill="#a6a6a6"/><path d="M0 7.3h4" stroke="#a6a6a6"/></svg>
<div style="left:279px;top:114px;width:1px;height:22px;background:#dcdcdc;"></div>
<svg style="position:absolute;left:285px;top:116px;" width="20" height="18" viewBox="0 0 20 18"><text x="1" y="12" font-family="Liberation Sans" font-size="10.5" fill="#a4a4a4" transform="rotate(-55 8 8)">ab</text><path d="M5 16.5 17.5 5" stroke="#a4a4a4" stroke-width="1.1"/><path d="M14.5 4.3h3.5V8" fill="none" stroke="#a4a4a4" stroke-width="1.1"/></svg>
<svg style="position:absolute;left:307px;top:125px;" width="5" height="3" viewBox="0 0 5 3"><path d="M0 0h4.5L2.25 2.5z" fill="#c4c4c4"/></svg>
<div style="left:344px;top:69px;width:76px;height:21px;border:1px solid #c6c6c6;background:#fff;"></div>
<div class="t" style="left:347.6px;top:74.48px;font-size:11.6px;line-height:14px;color:#a0a0a0;font-weight:400;">Currency</div>
<svg style="position:absolute;left:412px;top:79px;" width="6" height="4" viewBox="0 0 6 4"><path d="M0 0h5.5l-2.75 3z" fill="#bbb"/></svg>
<div class="t" style="left:351.5px;top:95.48px;font-size:14.5px;line-height:18px;color:#9c9c9c;font-weight:400;">$</div>
<svg style="position:absolute;left:369px;top:102px;" width="5" height="3" viewBox="0 0 5 3"><path d="M0 0h4.5L2.25 2.5z" fill="#c4c4c4"/></svg>
<div class="t" style="left:383px;top:95.15px;font-size:14px;line-height:18px;color:#9c9c9c;font-weight:400;">%</div>
<div class="t" style="left:407px;top:93.15px;font-size:14px;line-height:18px;color:#9c9c9c;font-weight:700;">,</div>
<div class="t" style="left:347px;top:117px;font-size:9px;line-height:8px;color:#a6a6a6;">&#8592;.0<br>&nbsp;.00</div>
<div class="t" style="left:368px;top:117px;font-size:9px;line-height:8px;color:#a6a6a6;">&nbsp;.00<br>&#8594;.0</div>
<svg style="position:absolute;left:434px;top:71px;" width="17" height="17" viewBox="0 0 17 17"><rect x=".5" y=".5" width="11" height="11" fill="#d0d0d0" stroke="#b4b4b4"/><path d="M0 4h12M4 0v12" stroke="#b4b4b4"/><rect x="5.5" y="5.5" width="10" height="10" fill="#fff" stroke="#a8a8a8"/><path d="M8 9h5M8 11h5M8 13h5" stroke="#aaa" stroke-width=".9"/></svg>
<div class="t" style="left:453.5px;top:73.67px;font-size:12.2px;line-height:15px;color:#a0a0a0;font-weight:400;">Conditional Formatting</div>
<svg style="position:absolute;left:580px;top:79px;" width="5" height="3" viewBox="0 0 5 3"><path d="M0 0h4.5L2.25 2.5z" fill="#c4c4c4"/></svg>
<svg style="position:absolute;left:434px;top:94px;" width="17" height="17" viewBox="0 0 17 17"><rect x=".5" y=".5" width="14" height="13" fill="#fff" stroke="#b4b4b4"/><path d="M0 4.5h15M0 9h15M5 0v14M10 0v14" stroke="#c4c4c4"/><path d="M7 16 16 7l-2-2-9 9z" fill="#9a9a9a"/></svg>
<div class="t" style="left:453.5px;top:97.02px;font-size:11.5px;line-height:14px;color:#a0a0a0;font-weight:400;">Format as Table</div>
<svg style="position:absolute;left:540px;top:102px;" width="5" height="3" viewBox="0 0 5 3"><path d="M0 0h4.5L2.25 2.5z" fill="#c4c4c4"/></svg>
<svg style="position:absolute;left:434px;top:117px;" width="17" height="17" viewBox="0 0 17 17"><rect x=".5" y=".5" width="14" height="13" fill="#fff" stroke="#b4b4b4"/><path d="M3 4h9M3 7h9" stroke="#c4c4c4"/><path d="M7 16 16 7l-2-2-9 9z" fill="#9a9a9a"/></svg>
<div class="t" style="left:453.5px;top:119.99px;font-size:11px;line-height:14px;color:#a0a0a0;font-weight:400;">Cell Styles</div>
<svg style="position:absolute;left:509px;top:125px;" width="5" height="3" viewBox="0 0 5 3"><path d="M0 0h4.5L2.25 2.5z" fill="#c4c4c4"/></svg>
<svg style="position:absolute;left:603px;top:72px;" width="19" height="17" viewBox="0 0 19 17"><path d="M.5 .5h9v15h-9zM0 5.5h10M0 10.5h10M5 0v16" fill="none" stroke="#a4a4a4"/><rect x="10.5" y="5.5" width="7.5" height="4" fill="none" stroke="#a4a4a4"/><path d="M14.2 5.5v4" stroke="#a4a4a4"/><path d="M1.3 8 4.3 6v4z" fill="#8e8e8e"/></svg>
<div class="t" style="left:623.5px;top:74.38px;font-size:11.3px;line-height:14px;color:#a0a0a0;font-weight:400;">Insert</div>
<svg style="position:absolute;left:661px;top:80px;" width="5" height="3" viewBox="0 0 5 3"><path d="M0 0h4.5L2.25 2.5z" fill="#c4c4c4"/></svg>
<svg style="position:absolute;left:603px;top:95px;" width="19" height="17" viewBox="0 0 19 17"><path d="M.5 .5h9v4h-9zM.5 10.5h9v5h-9zM5 0v5M5 10v6M.5 4.5v6h5v-6" fill="none" stroke="#a4a4a4"/><path d="M11 5l6 6M17 5l-6 6" stroke="#c0c0c0" stroke-width="1.2"/></svg>
<div class="t" style="left:623.5px;top:97.58px;font-size:11.3px;line-height:14px;color:#a0a0a0;font-weight:400;">Delete</div>
<svg style="position:absolute;left:666px;top:102px;" width="5" height="3" viewBox="0 0 5 3"><path d="M0 0h4.5L2.25 2.5z" fill="#c4c4c4"/></svg>
<svg style="position:absolute;left:603px;top:117px;" width="17" height="18" viewBox="0 0 17 18"><rect x=".5" y="4.5" width="14" height="12" fill="none" stroke="#a4a4a4"/><path d="M0 8.5h15M0 12.5h15M5 4v13M10 4v13" stroke="#a4a4a4"/><rect x="5" y="8.5" width="5" height="4" fill="#8e8e8e"/><path d="M1 1.5h13M1 0v3M14 0v3" stroke="#a4a4a4"/></svg>
<div class="t" style="left:623.5px;top:119.45px;font-size:11.7px;line-height:15px;color:#a0a0a0;font-weight:400;">Format</div>
<svg style="position:absolute;left:664px;top:125px;" width="5" height="3" viewBox="0 0 5 3"><path d="M0 0h4.5L2.25 2.5z" fill="#c4c4c4"/></svg>
<svg style="position:absolute;left:687px;top:72px;" width="17" height="16" viewBox="0 0 17 16"><path d="M1 1h14.5v2.5M1 1l7 7-7 7h14.5V12.5" fill="none" stroke="#444" stroke-width="2.1"/></svg>
<svg style="position:absolute;left:709px;top:80px;" width="6" height="4" viewBox="0 0 6 4"><path d="M0 0h5.5l-2.75 3z" fill="#555"/></svg>
<svg style="position:absolute;left:723px;top:70px;" width="17" height="19" viewBox="0 0 17 19"><text x="0" y="8" font-family="Liberation Sans" font-size="8" fill="#b8b8b8">A</text><text x="0" y="17.5" font-family="Liberation Sans" font-size="8" fill="#b8b8b8">Z</text><path d="M8 6h7l-2.5 3.5v4l-2 1v-5z" fill="#b8b8b8"/></svg>
<svg style="position:absolute;left:744px;top:80px;" width="5" height="3" viewBox="0 0 5 3"><path d="M0 0h4.5L2.25 2.5z" fill="#c4c4c4"/></svg>
<svg style="position:absolute;left:689px;top:95px;" width="15" height="16" viewBox="0 0 15 16"><rect x=".5" y=".5" width="14" height="15" fill="#fff" stroke="#b4b4b4"/><rect x="0" y="0" width="15" height="3" fill="#b4b4b4"/><path d="M7.5 5v8M4 9.5l3.5 3.5 3.5-3.5" fill="none" stroke="#a8a8a8" stroke-width="1.3"/></svg>
<svg style="position:absolute;left:708px;top:102px;" width="5" height="3" viewBox="0 0 5 3"><path d="M0 0h4.5L2.25 2.5z" fill="#c4c4c4"/></svg>
<svg style="position:absolute;left:723px;top:96px;" width="15" height="14" viewBox="0 0 15 14"><circle cx="9" cy="5.5" r="4.3" fill="none" stroke="#2e64b0" stroke-width="1.9"/><path d="M6 8.5 1 13.3" stroke="#2e64b0" stroke-width="2.4"/></svg>
<svg style="position:absolute;left:743px;top:102px;" width="6" height="4" viewBox="0 0 6 4"><path d="M0 0h5.5l-2.75 3z" fill="#444"/></svg>
<svg style="position:absolute;left:689px;top:118px;" width="14" height="14" viewBox="0 0 14 14"><path d="M8 1l5 5-6 6H4L1 9z" fill="#e46b7a"/><path d="M1 9l3 3h3" fill="#f7b3bb"/><path d="M0 13.5h9" stroke="#bbb"/></svg>
<svg style="position:absolute;left:708px;top:125px;" width="6" height="4" viewBox="0 0 6 4"><path d="M0 0h5.5l-2.75 3z" fill="#444"/></svg>
<svg style="position:absolute;left:812px;top:147px;" width="10" height="6" viewBox="0 0 10 6"><path d="M1 5.5 5 1.5 9 5.5" fill="none" stroke="#555" stroke-width="1.7"/></svg>
</body></html>
